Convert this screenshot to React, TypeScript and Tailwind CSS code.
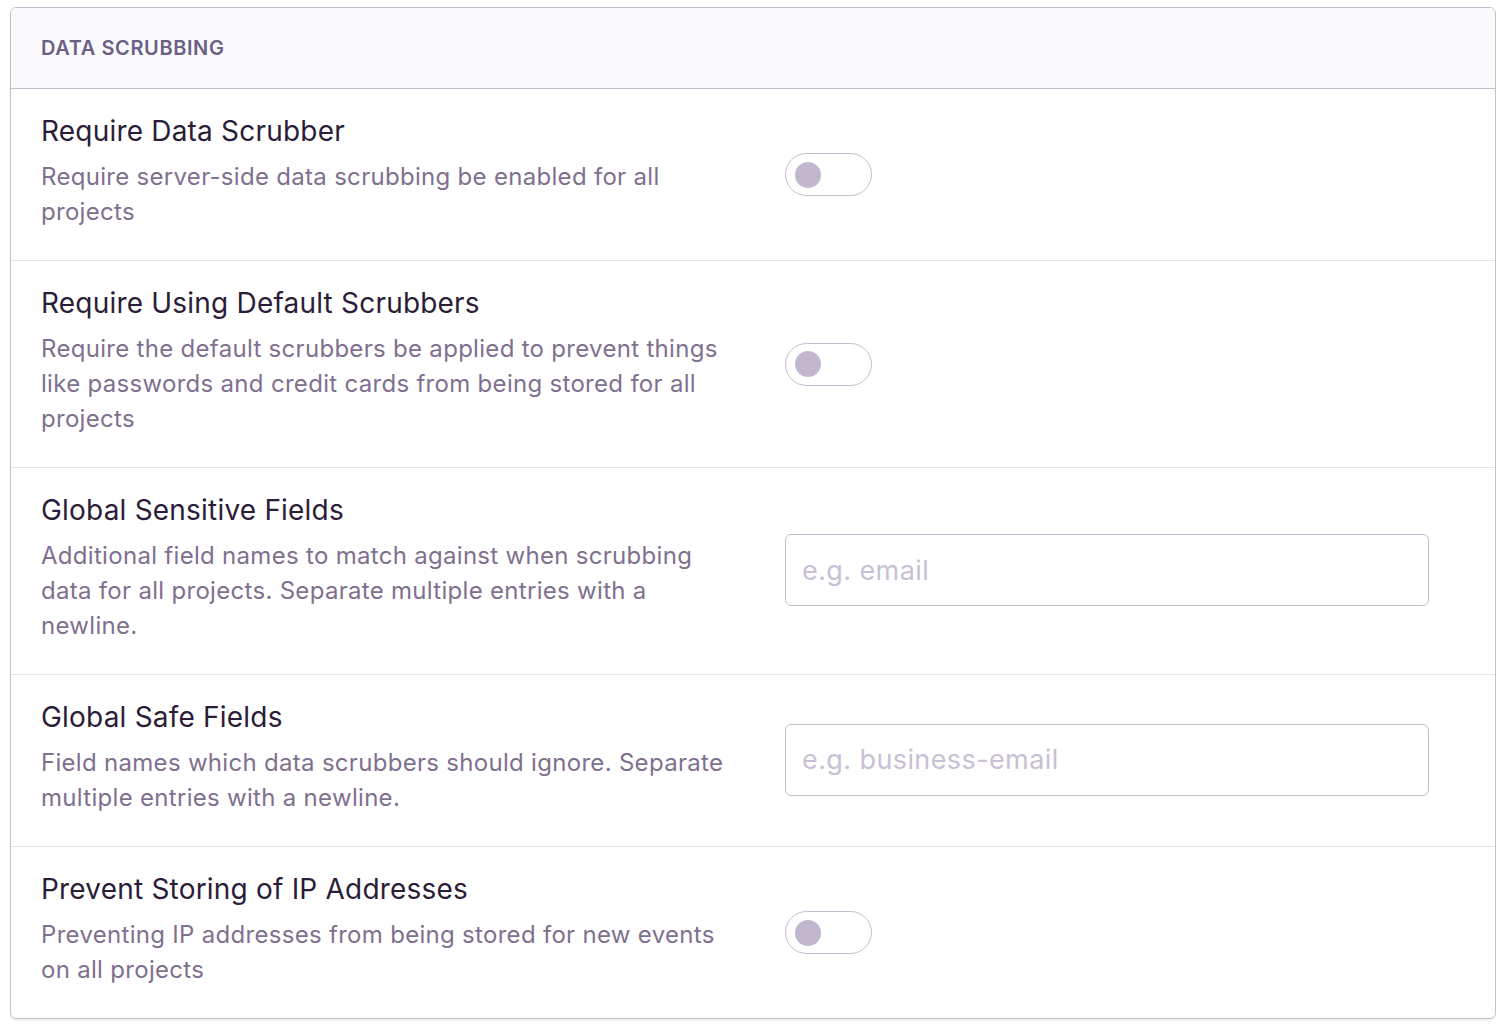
const rows = [
  {
    title: "Require Data Scrubber",
    desc: ["Require server-side data scrubbing be enabled for all", "projects"],
    kind: "toggle",
  },
  {
    title: "Require Using Default Scrubbers",
    desc: [
      "Require the default scrubbers be applied to prevent things",
      "like passwords and credit cards from being stored for all",
      "projects",
    ],
    kind: "toggle",
  },
  {
    title: "Global Sensitive Fields",
    desc: [
      "Additional field names to match against when scrubbing",
      "data for all projects. Separate multiple entries with a",
      "newline.",
    ],
    kind: "input",
    placeholder: "e.g. email",
  },
  {
    title: "Global Safe Fields",
    desc: ["Field names which data scrubbers should ignore. Separate", "multiple entries with a newline."],
    kind: "input",
    placeholder: "e.g. business-email",
  },
  {
    title: "Prevent Storing of IP Addresses",
    desc: ["Preventing IP addresses from being stored for new events", "on all projects"],
    kind: "toggle",
  },
];

function Toggle() {
  return (
    <button className="flex h-[43px] w-[87px] items-center rounded-full border border-[#c6becf] bg-white pl-[9px]">
      <span className="h-[26px] w-[26px] rounded-full bg-[#c1b8cf]" />
    </button>
  );
}

export default function App() {
  return (
    <div className="min-h-[1024px] bg-white pl-[10px] pr-[8px] pt-[7px] font-['Inter',sans-serif]">
      <div className="overflow-hidden rounded-[6px] border border-[#c6becf] bg-white shadow-[0_2px_2px_rgba(0,0,0,0.06)]">
        <div className="flex h-[81px] items-center border-b border-[#c6becf] bg-[#fafafc] px-[30px]">
          <h2 className="text-[20px] font-semibold uppercase tracking-[0.6px] text-[#6c5f86]">
            Data Scrubbing
          </h2>
        </div>
        {rows.map((r, i) => (
          <div
            key={r.title}
            className={`grid grid-cols-[714px_1fr] items-center gap-[30px] px-[30px] pt-[24px] pb-[31px] ${
              i > 0 ? "border-t border-[#e7e1ec]" : ""
            }`}
          >
            <div>
              <div className="text-[28px] leading-[36px] tracking-[0.2px] text-[#2b1d38]">{r.title}</div>
              <p className="mt-[10px] text-[24px] leading-[35px] tracking-[0.3px] text-[#80708f]">
                {r.desc.map((line) => (
                  <span key={line} className="block whitespace-nowrap">
                    {line}
                  </span>
                ))}
              </p>
            </div>
            <div className={r.kind === "toggle" ? "pt-[7px]" : "pt-[5px]"}>
              {r.kind === "toggle" ? (
                <Toggle />
              ) : (
                <input
                  placeholder={r.placeholder}
                  className="h-[72px] w-[644px] rounded-[6px] border border-[#c6becf] px-[16px] text-[27px] tracking-[0.4px] text-[#2b1d38] placeholder:text-[#c8c0d5] outline-none"
                />
              )}
            </div>
          </div>
        ))}
      </div>
    </div>
  );
}
